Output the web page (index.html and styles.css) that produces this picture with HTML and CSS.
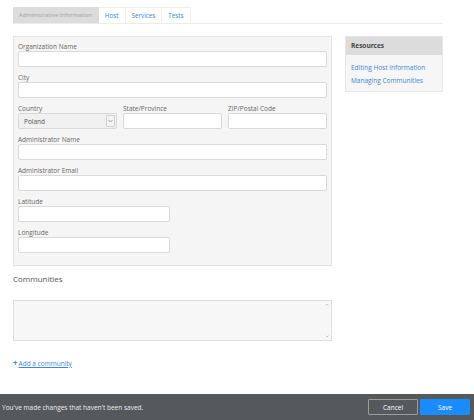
FILE: index.html
```html
<!DOCTYPE html>
<html lang="en">
  <head>
    <meta charset="UTF-8" />
    <meta name="viewport" content="width=device-width, initial-scale=1.0" />
    <title>Host: Administrative Information</title>
    <link rel="stylesheet" href="styles.css">
  </head>
  <body>
    <div class="page">
      <ul class="tabs">
        <li class="tab active">Administrative Information</li>
        <li class="tab"><a href="#">Host</a></li>
        <li class="tab"><a href="#">Services</a></li>
        <li class="tab"><a href="#">Tests</a></li>
      </ul>
      <div class="main">
        <div class="content">
          <form class="panel my-form">
            <div class="field">
              <label for="org_name">Organization Name</label>
              <input type="text" id="org_name" />
            </div>
            <div class="field">
              <label for="city">City</label>
              <input type="text" id="city" />
            </div>
            <div class="row">
              <div class="field">
                <label>Country</label>
                <div class="select">
                  <span>Poland</span>
                  <span class="arrow">
                    <svg width="5" height="4" viewBox="0 0 5 4"><path d="M0.5 1 L2.5 3 L4.5 1" fill="none" stroke="#888" stroke-width="0.8"/></svg>
                  </span>
                </div>
              </div>
              <div class="field">
                <label for="state">State/Province</label>
                <input type="text" id="state" />
              </div>
              <div class="field">
                <label for="zip">ZIP/Postal Code</label>
                <input type="text" id="zip" />
              </div>
            </div>
            <div class="field">
              <label for="admin_name">Administrator Name</label>
              <input type="text" id="admin_name" />
            </div>
            <div class="field">
              <label for="admin_email">Administrator Email</label>
              <input type="text" id="admin_email" />
            </div>
            <div class="field half">
              <label for="lat">Latitude</label>
              <input type="text" id="lat" />
            </div>
            <div class="field half">
              <label for="lon">Longitude</label>
              <input type="text" id="lon" />
            </div>
          </form>
          <h2>Communities</h2>
          <div class="list-box">
            <div class="scroll">
              <svg width="4" height="3" viewBox="0 0 4 3"><path d="M0.5 2.5 L2 1 L3.5 2.5" fill="none" stroke="#bbb" stroke-width="0.7"/></svg>
              <svg width="4" height="3" viewBox="0 0 4 3"><path d="M0.5 0.5 L2 2 L3.5 0.5" fill="none" stroke="#bbb" stroke-width="0.7"/></svg>
            </div>
          </div>
          <a href="#" class="add-link"><span class="plus">+</span><span class="u">Add a community</span></a>
        </div>
        <div class="side">
          <div class="side-head">Resources</div>
          <div class="side-body">
            <a href="#">Editing Host Information</a>
            <a href="#">Managing Communities</a>
          </div>
        </div>
      </div>
    </div>
    <div class="save-bar">
      <span>You've made changes that haven't been saved.</span>
      <div class="actions">
        <button class="btn btn-cancel" type="button">Cancel</button>
        <button class="btn btn-save" type="button">Save</button>
      </div>
    </div>
  </body>
</html>
```
FILE: styles.css
```css
*, *:before, *:after {
  box-sizing: border-box;
}
body {
  margin: 0;
  font-family: "Open Sans", "Liberation Sans", sans-serif;
  font-size: 6.5px;
  color: #555;
  background: #fff;
}
a {
  color: #3b86d8;
  text-decoration: none;
}
.page {
  padding: 7px 31px 0 13px;
}
.tabs {
  display: flex;
  margin: 0;
  padding: 0;
  list-style: none;
  border-bottom: 1px solid #ececec;
}
.tab {
  height: 16px;
  line-height: 15px;
  padding: 0 6px;
  border: 1px solid #efefef;
  border-bottom: none;
  border-left: none;
  font-size: 6.3px;
}
.tab.active {
  background: #dcdcdc;
  color: #a3a3a3;
  border-color: #dcdcdc;
  font-size: 5.8px;
}
.main {
  display: flex;
  gap: 13px;
  margin-top: 12px;
}
.content {
  width: 319px;
}
.panel {
  background: #f5f5f5;
  border: 1px solid #e3e3e3;
  padding: 5px 4px 6px 4px;
}
.field {
  margin-bottom: 6px;
}
.field label {
  display: block;
  height: 9px;
  line-height: 9px;
  color: #666;
}
.my-form input[type=text], .select {
  display: block;
  width: 100%;
  height: 16px;
  margin: 0;
  padding: 0 5px;
  border: 1px solid #d9d9d9;
  border-radius: 2px;
  background: #fff;
  font: inherit;
}
.half {
  width: 152px;
}
.row {
  display: grid;
  grid-template-columns: 99px 99px 1fr;
  gap: 6px;
}
.select {
  display: flex;
  align-items: center;
  justify-content: space-between;
  background: #f0f0f0;
  padding-right: 1px;
  color: #555;
}
.arrow {
  display: flex;
  align-items: center;
  justify-content: center;
  width: 9px;
  height: 12px;
  border: 1px solid #cfcfcf;
  border-radius: 1px;
  background: #f4f4f4;
}
h2 {
  margin: 7px 0 0 0;
  height: 12px;
  line-height: 12px;
  font-size: 8px;
  font-weight: normal;
  color: #555;
}
.list-box {
  display: flex;
  justify-content: flex-end;
  height: 41px;
  margin-top: 15px;
  background: #f7f7f7;
  border: 1px solid #dedede;
}
.scroll {
  display: flex;
  flex-direction: column;
  justify-content: space-between;
  width: 6px;
  padding: 2px 0;
}
.add-link {
  display: inline-block;
  margin-top: 17px;
  line-height: 9px;
}
.plus {
  font-weight: bold;
  font-size: 8px;
  margin-right: 1px;
}
.u {
  text-decoration: underline;
}
.side {
  width: 98px;
  align-self: flex-start;
  border: 1px solid #e6e6e6;
  background: #f6f6f6;
}
.side-head {
  height: 18px;
  line-height: 18px;
  padding: 0 5px;
  background: #dcdcdc;
  font-weight: bold;
  color: #444;
}
.side-body {
  padding: 6px 5px 4px 5px;
}
.side-body a {
  display: block;
  line-height: 13px;
}
.save-bar {
  position: fixed;
  left: 0;
  right: 0;
  bottom: 0;
  height: 26px;
  display: flex;
  align-items: center;
  justify-content: space-between;
  padding: 0 4px 0 2px;
  background: #55595c;
  color: #eee;
}
.actions {
  display: flex;
  gap: 2px;
}
.btn {
  width: 50px;
  height: 16px;
  padding: 0;
  font: inherit;
  color: #fff;
  border: 1px solid transparent;
  border-radius: 1px;
  cursor: pointer;
}
.btn-cancel {
  background: #55595c;
  border-color: #9a9c9e;
}
.btn-save {
  background: #1a8cff;
}
```
